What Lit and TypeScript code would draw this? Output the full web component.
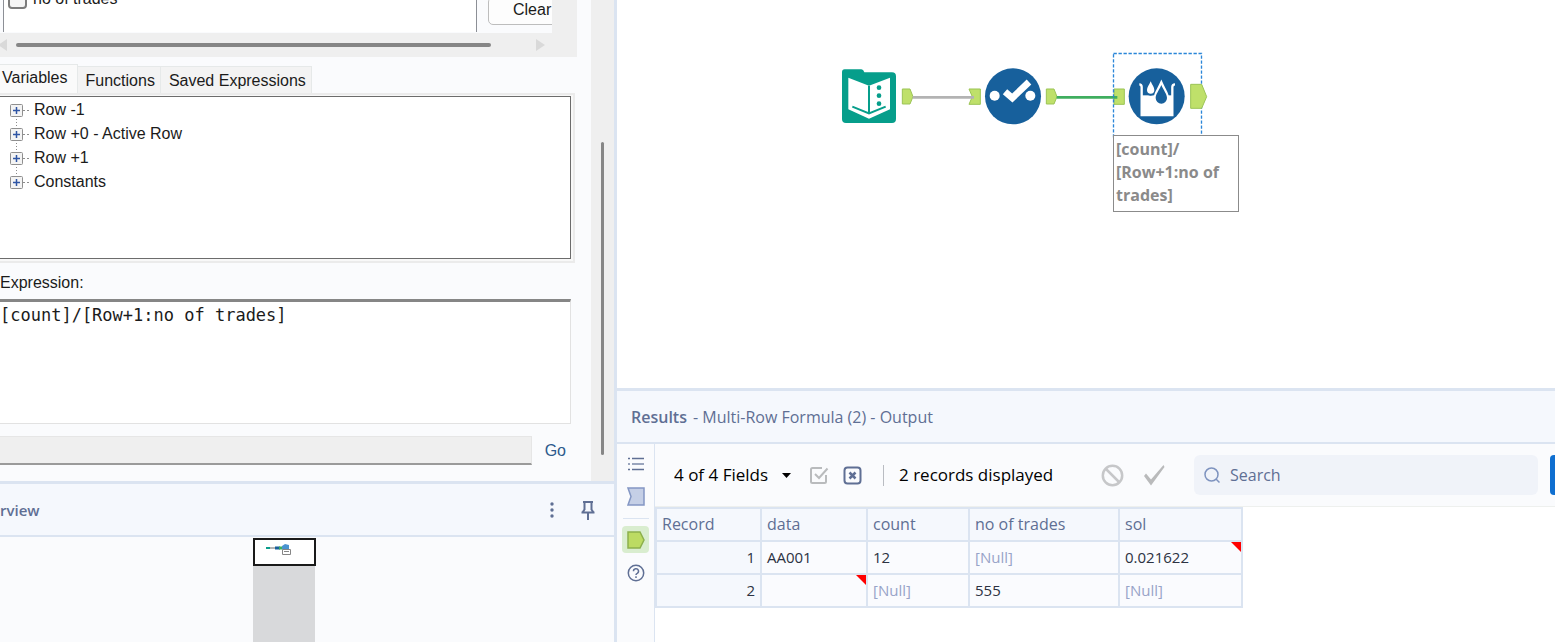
import { LitElement, html, css, svg } from "lit";
import { customElement, state } from "lit/decorators.js";

type Cell = { text: string; isNull?: boolean; flagged?: boolean };

const COLUMNS = ["data", "count", "no of trades", "sol"];
const ROWS: Cell[][] = [
  [{ text: "AA001" }, { text: "12" }, { text: "[Null]", isNull: true }, { text: "0.021622", flagged: true }],
  [{ text: "", flagged: true }, { text: "[Null]", isNull: true }, { text: "555" }, { text: "[Null]", isNull: true }],
];

@customElement("config-panel")
class ConfigPanel extends LitElement {
  @state() private tab = "Variables";

  static styles = css`
    :host {
      display: flex;
      background: #fafbfd;
      font: 16px/20px "Liberation Sans", Arial, sans-serif;
      color: #1b1b1b;
    }
    * { box-sizing: border-box; }
    button, input, textarea { font: inherit; color: inherit; margin: 0; }
    .content {
      flex: 1;
      min-width: 0;
      padding: 0 14px 16px 0;
      display: flex;
      flex-direction: column;
    }
    .fields { background: #efefef; height: 57px; flex: none; }
    .fields-view {
      display: flex;
      height: 33px;
      margin-right: 25px;
      padding-left: 3px;
      background: #fafbfd;
      overflow: hidden;
    }
    .list {
      flex: 1;
      height: 32px;
      background: #fff;
      border: solid #8c8f96;
      border-width: 0 1px;
      padding-left: 4px;
      display: flex;
      align-items: flex-start;
    }
    .field { display: flex; align-items: center; gap: 6px; margin-top: -11px; }
    .tick {
      appearance: none;
      width: 19px;
      height: 19px;
      border: 2px solid #7c7c7c;
      border-radius: 4px;
      background: #f5f5f5;
    }
    .clear-slot { width: 75px; padding-left: 11px; overflow: hidden; }
    .clear {
      width: 96px;
      height: 28px;
      margin-top: -12px;
      padding: 0 0 2px 24px;
      text-align: left;
      border: 1px solid #bdbdbd;
      border-radius: 5px;
      background: #fdfdfd;
    }
    .hscroll { display: flex; align-items: center; height: 24px; padding-right: 32px; }
    .arrow { width: 9px; height: 12px; fill: #d9d9d9; flex: none; }
    .thumb { flex: 1; height: 4px; margin: 0 45px 0 9px; border-radius: 2px; background: #868686; }
    .arrow.back { margin-left: -2px; }
    .tabs { display: flex; align-items: flex-end; margin-top: 7px; height: 29px; }
    .tab {
      height: 27px;
      background: #f3f3f3;
      border: 1px solid #e6e9e9;
      border-left: 0;
      border-bottom: 0;
      padding: 2px 5px 0 8px;
      white-space: nowrap;
    }
    .tab.active { height: 29px; background: #fafafa; padding: 0 9px 3px 2px; }
    .tree-frame { border: solid #ebebeb; border-width: 2px 2px 2px 0; padding: 1px 2px 2px 0; margin-right: 2px; background: #f8f8f8; }
    .tree {
      margin: 0;
      padding: 1px 0 0 10px;
      list-style: none;
      height: 163px;
      background: #fff;
      border: 1px solid #6c6c6c;
      border-left: 0;
    }
    .node { height: 24px; display: flex; align-items: center; }
    .toggle {
      border: 0;
      background: none;
      padding: 0;
      display: flex;
      align-items: center;
      gap: 3px;
      white-space: nowrap;
    }
    .toggle svg { width: 21px; height: 24px; display: block; }
    .label { margin: 12px 0 8px; line-height: 16px; }
    .expr {
      display: block;
      resize: none;
      width: calc(100% - 6px);
      height: 125px;
      border: 1px solid #e2e2e2;
      border-top: 3px solid #868686;
      border-left: 0;
      outline: 0;
      padding: 1px 0 0;
      background: #fff;
      font: 17px/24px "DejaVu Sans Mono", monospace;
    }
    .find { display: flex; align-items: center; margin-top: 12px; height: 29px; padding-right: 11px; }
    .find-box {
      flex: 1;
      min-width: 0;
      height: 29px;
      background: #efefef;
      border: 1px solid #e6e6e6;
      border-bottom: 2px solid #9a9a9a;
      border-left: 0;
      outline: 0;
    }
    .go { border: 0; background: none; padding: 0; margin-left: 13px; color: #2c5a8c; }
    .vscroll { width: 23px; flex: none; background: #efefef; padding: 142px 9px 26px 10px; display: flex; }
    .vthumb { width: 3px; background: #868686; border-radius: 2px; }
  `;

  render() {
    const nodes = ["Row -1", "Row +0 - Active Row", "Row +1", "Constants"];
    return html`
      <div class="content">
        <div class="fields">
          <div class="fields-view">
            <div class="list">
              <label class="field"><input class="tick" type="checkbox" />no of trades</label>
            </div>
            <div class="clear-slot"><button class="clear">Clear</button></div>
          </div>
          <div class="hscroll">
            <svg class="arrow back" viewBox="0 0 9 12"><path d="M9 0v12L0 6z" /></svg>
            <div class="thumb"></div>
            <svg class="arrow" viewBox="0 0 9 12"><path d="M0 0v12l9-6z" /></svg>
          </div>
        </div>
        <div class="tabs" role="tablist">
          ${["Variables", "Functions", "Saved Expressions"].map(
            (t) => html`<button class="tab ${t === this.tab ? "active" : ""}" role="tab" @click=${() => (this.tab = t)}>${t}</button>`
          )}
        </div>
        <div class="tree-frame">
          <ul class="tree">
            ${nodes.map(
              (n, i) => html`<li class="node"><button class="toggle">
                <svg viewBox="0 0 21 24" fill="none">
                  <path d="M6.5 ${i ? 0 : 12}V${i < nodes.length - 1 ? 24 : 12}" stroke="#8c8c8c" stroke-dasharray="1 2" />
                  <path d="M13 12.500h6" stroke="#8c8c8c" stroke-dasharray="2 2" />
                  <rect x=".5" y="6.500" width="12" height="12" rx="1" fill="#f4f4f4" stroke="#8f8f8f" />
                  <path d="M3 12.500h7M6.500 9v7" stroke="#2f55a4" stroke-width="1.500" />
                </svg>${n}</button></li>`
            )}
          </ul>
        </div>
        <label class="label" for="expr">Expression:</label>
        <textarea class="expr" id="expr" spellcheck="false" .value=${"[count]/[Row+1:no of trades]"}></textarea>
        <div class="find">
          <input class="find-box" type="text" aria-label="Find" />
          <button class="go">Go</button>
        </div>
      </div>
      <div class="vscroll"><div class="vthumb"></div></div>
    `;
  }
}

@customElement("overview-panel")
class OverviewPanel extends LitElement {
  static styles = css`
    :host {
      display: flex;
      flex-direction: column;
      border-top: 3px solid #dbe4f1;
      background: #fafbfd;
      font: 15px/20px "Open Sans", "Noto Sans", sans-serif;
      color: #5f6f94;
    }
    .head {
      display: flex;
      align-items: center;
      gap: 18px;
      height: 53px;
      flex: none;
      box-sizing: border-box;
      padding-right: 17px;
      background: #f5f8fd;
      border-bottom: 2px solid #dbe4f1;
    }
    .title { flex: 1; margin: 0; font-size: 15px; font-weight: 600; }
    .tool { border: 0; background: none; padding: 0; display: flex; color: #5f6f94; }
    .map { flex: 1; min-height: 0; display: flex; flex-direction: column; width: 63px; margin: 1px 0 0 253px; }
    .view { height: 28px; flex: none; box-sizing: border-box; border: 2px solid #1a1a1a; background: #fff; }
    .view svg { display: block; }
    .rest { flex: 1; background: #d8d9db; margin-right: 1px; }
  `;

  render() {
    return html`
      <header class="head">
        <h2 class="title">rview</h2>
        <button class="tool" aria-label="Menu">
          <svg width="18" height="20" fill="currentColor"><circle cx="9" cy="4" r="1.700" /><circle cx="9" cy="10" r="1.700" /><circle cx="9" cy="16" r="1.700" /></svg>
        </button>
        <button class="tool" aria-label="Pin">
          <svg width="18" height="20" fill="none" stroke="currentColor" stroke-width="2">
            <path d="M4 2h10M5.500 2v8M12.500 2v8M2.500 12.500h13M5.500 9.500L3.500 12.500M12.500 9.500l2 3M9 12.500V20" />
          </svg>
        </button>
      </header>
      <div class="map">
        <div class="view">
          <svg width="59" height="24">
            <path d="M11 8h4" stroke="#0b9d8b" stroke-width="2" />
            <path d="M15 8h5" stroke="#b4b4b4" stroke-width="2" />
            <path d="M20 8h5" stroke="#17609c" stroke-width="3" />
            <path d="M24 8h4" stroke="#3fae5f" stroke-width="3" />
            <path d="M27 9V6l3-2 4 1v5z" fill="#4a93cf" />
            <path d="M27.500 9.500h8v5h-8zM29 11.500h5" fill="#fff" stroke="#868686" />
          </svg>
        </div>
        <div class="rest"></div>
      </div>
    `;
  }
}

@customElement("workflow-canvas")
class WorkflowCanvas extends LitElement {
  static styles = css`
    :host { display: block; position: relative; overflow: hidden; background: #fff; }
    .diagram { display: block; width: 100%; height: 100%; }
    .note {
      position: absolute;
      left: 496px;
      top: 135px;
      width: 126px;
      box-sizing: border-box;
      padding: 2px 1px 4px 2px;
      border: 1px solid #8b8b8b;
      background: #fff;
      color: #8a8a8a;
      font: 700 16px/23px "Open Sans", "Noto Sans", sans-serif;
      margin: 0;
    }
  `;

  render() {
    const anchor = (d: string) => svg`<path d=${d} fill="#bfe06a" stroke="#9cc455" stroke-width="3" />`;
    return html`
      <svg class="diagram">
        <g transform="translate(203 40) scale(.33333)">
          <path d="M74 88h50q6 0 9 9h83q12 0 12 12v128q0 12-12 12H78q-12 0-12-12V97q0-9 8-9z" fill="#069e8b" />
          <path d="M85 113l62 24 63-24v95l-63 28-62-28z" fill="#fff" />
          <path d="M147 137v82M97 200l50 20 50-20" fill="none" stroke="#069e8b" stroke-width="6" />
          <circle cx="177" cy="143" r="7" fill="#069e8b" />
          <circle cx="177" cy="167" r="7" fill="#069e8b" />
          <circle cx="177" cy="191" r="7" fill="#069e8b" />
          ${anchor("M247 147h23l9 23-9 22h-23z")}
          ${anchor("M447 147h34v46h-34l10-23z")}
          <path d="M278 172h184" stroke="#b3b3b3" stroke-width="8" />
          <circle cx="579" cy="169" r="84" fill="#17609c" />
          <circle cx="524" cy="167" r="15" fill="#fff" />
          <circle cx="631" cy="167" r="15" fill="#fff" />
          <path d="M555 155l22 19 50-48" fill="none" stroke="#fff" stroke-width="20" />
        </g>
        <g transform="translate(413 40) scale(.33333)">
          ${anchor("M49 147h23l9 23-9 22H49z")}
          ${anchor("M252 147h31v46h-31z")}
          <path d="M80 172h182" stroke="#3fae5f" stroke-width="8" />
          <circle cx="380" cy="169" r="84" fill="#17609c" />
          <path d="M328 133q7 0 7 8v84h92v-84q0-8 8-8" fill="none" stroke="#fff" stroke-width="7" />
          <path d="M336 166h90v61h-90z" fill="#fff" />
          <path d="M362 118c-6 14-16 23-16 33a16 16 0 0 0 32 0c0-10-10-19-16-33z" fill="#17609c" />
          <path d="M362 124c-5 12-11 18-11 26a11 11 0 0 0 22 0c0-8-6-14-11-26z" fill="#fff" />
          <path d="M394 133c-8 18-17 28-17 41a17 17 0 0 0 34 0c0-13-9-23-17-41z" fill="#17609c" stroke="#fff" stroke-width="12" />
          <path d="M394 135c-8 18-17 28-17 39a17 17 0 0 0 34 0c0-11-9-21-17-39z" fill="#17609c" />
          <rect x="250.500" y="40.500" width="264" height="252" fill="none" stroke="#2b86d8" stroke-width="4" stroke-dasharray="10 5" />
          ${anchor("M482 133h33l15 37-15 35h-33z")}
        </g>
      </svg>
      <p class="note">[count]/<br />[Row+1:no of trades]</p>
    `;
  }
}

@customElement("results-panel")
class ResultsPanel extends LitElement {
  static styles = css`
    :host {
      display: flex;
      flex-direction: column;
      min-height: 254px;
      box-sizing: border-box;
      border-top: 3px solid #dbe4f1;
      background: #fff;
      font: 16px/20px "Open Sans", "Noto Sans", sans-serif;
      color: #5f6f94;
    }
    * { box-sizing: border-box; }
    button, input, select { font: inherit; color: inherit; margin: 0; padding: 0; border: 0; background: none; outline: 0; }
    button { display: flex; }
    .head {
      height: 53px;
      flex: none;
      display: flex;
      align-items: center;
      padding-left: 14px;
      gap: 6px;
      margin: 0;
      font-size: 16px;
      font-weight: 400;
      background: #f5f8fd;
      border-bottom: 2px solid #dbe4f1;
      white-space: nowrap;
    }
    .head b { font-weight: 600; }
    .body { flex: 1; display: flex; }
    .rail {
      width: 38px;
      flex: none;
      display: flex;
      flex-direction: column;
      align-items: center;
      padding-top: 6px;
      background: #fafbfd;
      border-right: 1px solid #dbe4f1;
    }
    .rail button { width: 27px; height: 27px; align-items: center; justify-content: center; border-radius: 4px; }
    .rail button + button { margin-top: 6px; }
    .rule { width: 26px; height: 1px; margin: 8px 0 7px; background: #dbe4f1; }
    .rail .on { background: #d9edcf; }
    .main { flex: 1; min-width: 0; }
    .bar {
      display: flex;
      align-items: center;
      height: 63px;
      padding-left: 19px;
      background: #fafbfd;
      border-bottom: 1px solid #eef0ee;
      color: #000;
      font-size: 17px;
      overflow: hidden;
      white-space: nowrap;
    }
    .picker { display: grid; align-items: center; width: 117px; flex: none; }
    .picker select { grid-area: 1 / 1; appearance: none; width: 100%; }
    .picker svg { grid-area: 1 / 1; justify-self: end; pointer-events: none; }
    .check { margin-left: 18px; }
    .cross { margin-left: 14px; }
    .sep { width: 1px; height: 21px; margin: 0 15px 0 21px; background: #b9bcc2; flex: none; }
    .count { width: 202px; flex: none; }
    .ok { margin-left: 19px; }
    .search {
      flex: 1;
      min-width: 120px;
      display: flex;
      align-items: center;
      gap: 10px;
      height: 40px;
      margin: 0 12px 0 28px;
      padding: 0 10px;
      border-radius: 6px;
      background: #f0f3f9;
      color: #5f6f94;
      font-size: 16px;
    }
    .search input { flex: 1; min-width: 0; }
    .search input::placeholder { color: #5f6f94; opacity: 1; }
    .cell-view { width: 5px; height: 40px; flex: none; background: #0f6fd0; border-radius: 4px 0 0 4px; }
    .grid { border-collapse: collapse; table-layout: fixed; width: 588px; color: #2c3242; }
    .w-rec { width: 105px; }
    .w-data { width: 106px; }
    .w-count { width: 102px; }
    .w-trades { width: 150px; }
    th, td {
      height: 33px;
      border: 2px solid #dbe4f1;
      padding: 0 5px 1px;
      text-align: left;
      font-weight: 400;
      background: #fafbfe;
      position: relative;
    }
    thead th { color: #5f6f94; background: #f5f8fd; }
    tbody { font-size: 15px; }
    tbody th { text-align: right; background: #f5f8fd; }
    .null { color: #98a3c8; }
    .flag { position: absolute; top: 0; right: 0; width: 10px; height: 10px; background: #f00; clip-path: polygon(0 0, 100% 0, 100% 100%); }
  `;

  render() {
    return html`
      <h2 class="head"><b>Results</b><span>- Multi-Row Formula (2) - Output</span></h2>
      <div class="body">
        <nav class="rail" aria-label="Result views">
          <button aria-label="Messages">
            <svg width="16" height="14" stroke="#5f6f94"><path d="M0 1.500h2M4 1.500h12M0 12.500h2M4 12.500h12" stroke-width="1.500" /><path d="M0 7h2M4 7h12" stroke="#9aa5bd" stroke-width="2" /></svg>
          </button>
          <button aria-label="Input">
            <svg width="18" height="19"><path d="M1 1h16v17H1l3-8.500z" fill="#c5cfe6" stroke="#8497c4" stroke-width="1.500" /></svg>
          </button>
          <div class="rule"></div>
          <button class="on" aria-label="Output">
            <svg width="18" height="18"><path d="M1 1h12l4 8-4 8H1z" fill="#bcdb63" stroke="#8cb04d" stroke-width="1.500" /></svg>
          </button>
          <button aria-label="Help">
            <svg width="18" height="18" fill="none" stroke="#5f6f94" stroke-width="1.500"><circle cx="9" cy="9" r="7.700" /><path d="M6.500 7.300a2.500 2.500 0 1 1 3.700 2.100q-1.200.6-1.200 1.700" /><path d="M9 12.300v1.700" /></svg>
          </button>
        </nav>
        <section class="main">
          <div class="bar">
            <label class="picker">
              <select aria-label="Fields"><option>4 of 4 Fields</option></select>
              <svg width="9" height="5"><path d="M0 0h9L4.500 5z" /></svg>
            </label>
            <button class="check" aria-label="Select all">
              <svg width="20" height="19" fill="none" stroke="#b9bbbd" stroke-width="2"><path d="M13 2H3.500Q2 2 2 3.500v12Q2 17 3.500 17h12q1.500 0 1.500-1.500V9" /><path d="M6 8l4 4 8.500-9.500" /></svg>
            </button>
            <button class="cross" aria-label="Deselect all">
              <svg width="19" height="19" fill="none" stroke="#5f6f94"><rect x="1.500" y="1.500" width="16" height="16" rx="3" stroke-width="2" /><path d="M6.500 6.500l6 6M12.500 6.500l-6 6" stroke-width="2.500" /></svg>
            </button>
            <div class="sep"></div>
            <span class="count">2 records displayed</span>
            <button aria-label="Cancel">
              <svg width="23" height="23" fill="none" stroke="#c6c7c9" stroke-width="2.500"><circle cx="11.500" cy="11.500" r="9.700" /><path d="M5 5l13 13" /></svg>
            </button>
            <button class="ok" aria-label="Apply">
              <svg width="23" height="23"><path d="M1 12l2-2.500 5 6L20.500 1l1 2L8 21.500z" fill="#b9babb" /></svg>
            </button>
            <label class="search">
              <svg width="16" height="16" fill="none" stroke="#7e93bf" stroke-width="1.500"><circle cx="7.500" cy="7.500" r="6.500" /><path d="M12 12l3.500 3.500" /></svg>
              <input type="text" placeholder="Search" aria-label="Search" />
            </label>
            <button class="cell-view" aria-label="Actions"></button>
          </div>
          <table class="grid">
            <colgroup><col class="w-rec" /><col class="w-data" /><col class="w-count" /><col class="w-trades" /><col /></colgroup>
            <thead><tr><th>Record</th>${COLUMNS.map((c) => html`<th>${c}</th>`)}</tr></thead>
            <tbody>
              ${ROWS.map(
                (row, i) => html`<tr><th>${i + 1}</th>${row.map(
                  (c) => html`<td class=${c.isNull ? "null" : ""}>${c.text}${c.flagged ? html`<span class="flag"></span>` : ""}</td>`
                )}</tr>`
              )}
            </tbody>
          </table>
        </section>
      </div>
    `;
  }
}

@customElement("app-root")
class AppRoot extends LitElement {
  static styles = css`
    :host { display: grid; grid-template-columns: 617px minmax(0, 1fr); height: 100vh; overflow: hidden; background: #fff; }
    .side { display: grid; grid-template-rows: auto minmax(0, 1fr); min-height: 0; border-right: 3px solid #dbe4f1; }
    .work { display: grid; grid-template-rows: minmax(0, 1fr) auto; min-height: 0; }
  `;

  render() {
    return html`
      <div class="side"><config-panel></config-panel><overview-panel></overview-panel></div>
      <div class="work"><workflow-canvas></workflow-canvas><results-panel></results-panel></div>
    `;
  }
}
